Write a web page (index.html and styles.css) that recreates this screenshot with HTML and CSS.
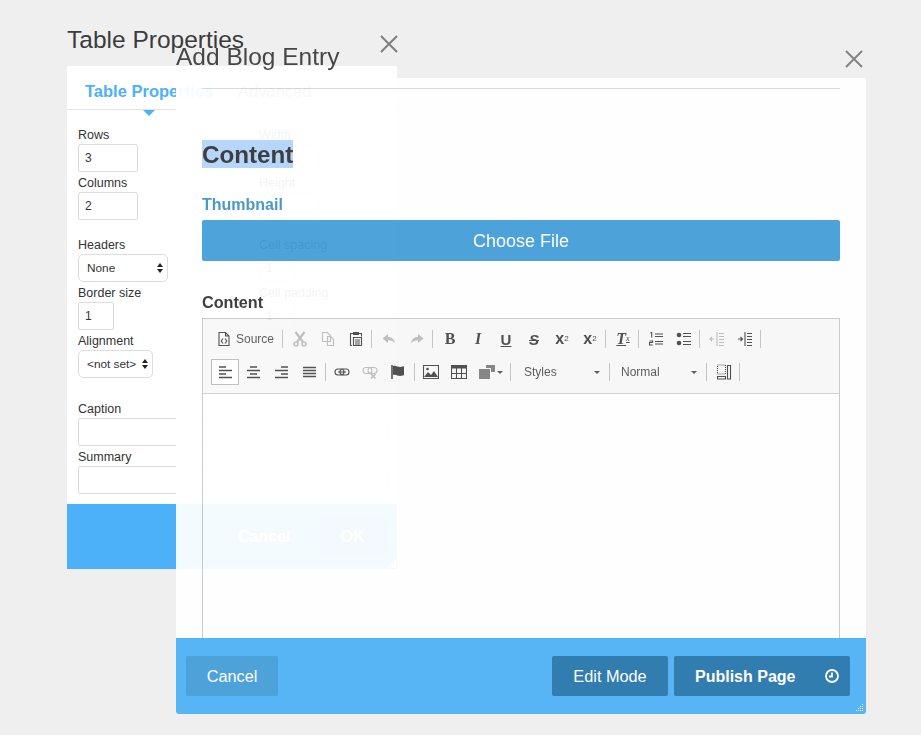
FILE: index.html
```html
<!DOCTYPE html>
<html lang="en">
<head>
<meta charset="utf-8">
<title>Add Blog Entry</title>
<link rel="stylesheet" href="styles.css">
</head>
<body>
<section class="win back">
  <header class="win-head">
    <h1>Table Properties</h1>
    <svg class="close" viewBox="0 0 18 18"><path d="M1 1l16 16M17 1L1 17"/></svg>
  </header>
  <div class="back-body">
    <nav class="tabs"><span class="tab on">Table Properties</span><span class="tab">Advanced</span></nav>
    <div class="form">
      <div class="cols">
        <div class="col">
          <div class="field"><label>Rows</label><input class="w60" value="3"></div>
          <div class="field"><label>Columns</label><input class="w60" value="2"></div>
          <div class="field mt14"><label>Headers</label><div class="sel w90"><span>None</span><svg viewBox="0 0 8 12"><path d="M4 1l3 4H1zM4 11L1 7h6z"/></svg></div></div>
          <div class="field"><label>Border size</label><input class="w36" value="1"></div>
          <div class="field"><label>Alignment</label><div class="sel w75"><span>&lt;not set&gt;</span><svg viewBox="0 0 8 12"><path d="M4 1l3 4H1zM4 11L1 7h6z"/></svg></div></div>
        </div>
        <div class="col">
          <div class="field"><label>Width</label><input class="w60"></div>
          <div class="field"><label>Height</label><input class="w60"></div>
          <div class="field mt14"><label>Cell spacing</label><input class="w36" value="1"></div>
          <div class="field"><label>Cell padding</label><input class="w36" value="1"></div>
        </div>
      </div>
      <div class="field mt21"><label>Caption</label><input class="wfull"></div>
      <div class="field"><label>Summary</label><input class="wfull"></div>
    </div>
    <footer class="back-foot"><button class="bf-btn">Cancel</button><button class="bf-btn dark">OK</button></footer>
  </div>
  <svg class="grip-back" viewBox="0 0 9 9"><path d="M9 0v9H0z"/></svg>
</section>

<section class="win front">
  <header class="win-head">
    <h1>Add Blog Entry</h1>
    <svg class="close" viewBox="0 0 18 18"><path d="M1 1l16 16M17 1L1 17"/></svg>
  </header>
  <div class="sheet">
    <div class="scroll">
      <hr class="rule">
      <h2><span class="picked">Content</span></h2>
      <h3>Thumbnail</h3>
      <button class="choose">Choose File</button>
      <h4>Content</h4>
      <div class="editor">
        <div class="toolbar">
          <div class="row">
            <span class="b source"><svg class="ic" viewBox="0 0 16 16"><path class="ln thin" d="M3 1.500h6.500L13 5v9.500H3zM9.500 1.500V5H13"/><path class="ln thin" d="M7 7.500L5.200 10 7 12.500M9 7.500l1.800 2.500L9 12.500"/></svg><em>Source</em></span>
            <i class="sep"></i>
            <span class="b off"><svg class="ic" viewBox="0 0 16 16"><path class="ln heavy" d="M3.500 1l7.500 10M12.500 1L5 11"/><circle class="ln" cx="4" cy="13" r="2"/><circle class="ln" cx="12" cy="13" r="2"/></svg></span>
            <span class="b off"><svg class="ic" viewBox="0 0 16 16"><path class="ln thin" d="M2.500 1.500h5l3 3v6h-8zM7.500 5.500h3l3 3v6h-6z"/></svg></span>
            <span class="b"><svg class="ic" viewBox="0 0 16 16"><path class="ln thin" d="M5 2.500H2.500v12H4M11 2.500h2.500v3"/><path class="fl" d="M5 1h6v3H5z"/><path class="ln thin" d="M5.500 6.500h8v8h-8zM7 9h5M7 11h5M7 13h5"/></svg></span>
            <i class="sep"></i>
            <span class="b off"><svg class="ic" viewBox="0 0 16 16"><path class="fl" d="M7 3L1.500 7.500 7 12V9.200c3 0 5 .8 7 3-.4-3.600-3-6-7-6.400z"/></svg></span>
            <span class="b off"><svg class="ic" viewBox="0 0 16 16"><path class="fl" d="M9 3l5.500 4.500L9 12V9.200c-3 0-5 .8-7 3 .4-3.600 3-6 7-6.400z"/></svg></span>
            <i class="sep"></i>
            <span class="b t bold">B</span>
            <span class="b t ital">I</span>
            <span class="b t under">U</span>
            <span class="b t strike">S</span>
            <span class="b t mark">x<sub>2</sub></span>
            <span class="b t mark">x<sup>2</sup></span>
            <i class="sep"></i>
            <span class="b t clear">T<sub>x</sub></span>
            <i class="sep"></i>
            <span class="b"><svg class="ic" viewBox="0 0 16 16"><path class="ln thin" d="M7 3h8M7 5.500h8M7 10.500h8M7 13h8M2.500 2l1.200-.5v5M1.500 10h3v1.500h-3v2.500h3.200"/></svg></span>
            <span class="b"><svg class="ic" viewBox="0 0 16 16"><circle class="fl" cx="3" cy="4" r="2.300"/><circle class="fl" cx="3" cy="12" r="2.300"/><path class="ln thin" d="M7 2.500h8M7 5.500h8M7 10.500h8M7 13.500h8"/></svg></span>
            <i class="sep"></i>
            <span class="b off"><svg class="ic" viewBox="0 0 16 16"><path class="ln thin" d="M8 1v14M10 2.500h5M10 5.500h5M10 8.500h5M10 11.500h5M10 14.500h5M1 8h4M3 6L1 8l2 2"/></svg></span>
            <span class="b"><svg class="ic" viewBox="0 0 16 16"><path class="ln thin" d="M8 1v14M10 2.500h5M10 5.500h5M10 8.500h5M10 11.500h5M10 14.500h5M1 8h4M3.500 6l2 2-2 2"/></svg></span>
            <i class="sep"></i>
          </div>
          <div class="row">
            <span class="b active"><svg class="ic" viewBox="0 0 16 16"><path class="ln" d="M2 3h7M2 6.500h13M2 10h7M2 13.500h13"/></svg></span>
            <span class="b"><svg class="ic" viewBox="0 0 16 16"><path class="ln" d="M5 3h7M2 6.500h13M5 10h7M2 13.500h13"/></svg></span>
            <span class="b"><svg class="ic" viewBox="0 0 16 16"><path class="ln" d="M8 3h7M2 6.500h13M8 10h7M2 13.500h13"/></svg></span>
            <span class="b"><svg class="ic" viewBox="0 0 16 16"><path class="ln" d="M2 3.500h13M2 6.500h13M2 9.500h13M2 12.500h13"/></svg></span>
            <i class="sep s2"></i>
            <span class="b"><svg class="ic" viewBox="0 0 16 16"><rect class="ln thin" x="1" y="5" width="9" height="6" rx="3"/><rect class="ln thin" x="6" y="5" width="9" height="6" rx="3"/><path class="ln thin" d="M4 8h8"/></svg></span>
            <span class="b off"><svg class="ic" viewBox="0 0 16 16"><rect class="ln thin" x="1" y="3.500" width="9" height="6" rx="3"/><rect class="ln thin" x="6" y="3.500" width="9" height="6" rx="3"/><path class="ln" d="M9 10l4.500 4.500M13.500 10L9 14.500"/></svg></span>
            <span class="b"><svg class="ic" viewBox="0 0 16 16"><path class="ln" d="M2 1v14"/><path class="fl" d="M3 2c3-1 4.500 1 7 1 2 0 4-1 4-1v9s-2 1-4 1c-2.500 0-4-2-7-1z"/></svg></span>
            <i class="sep s2"></i>
            <span class="b"><svg class="ic" viewBox="0 0 16 16"><path class="ln thin" d="M.5 1.500h15v13H.5z"/><path class="fl" d="M1 13l4-5 3 3 3-4 4 6z"/><circle class="fl" cx="4.500" cy="5" r="1.300"/></svg></span>
            <span class="b"><svg class="ic" viewBox="0 0 16 16"><path class="fl" d="M.5 1.500h15v3H.5z"/><path class="ln thin" d="M.5 1.500h15v13H.5zM.5 9.500h15M5.500 4v10.500M10.500 4v10.500"/></svg></span>
            <span class="b wide"><svg class="ic" viewBox="0 0 16 16"><path class="fl mid" d="M0 5h11v10H0zM7 1h9v7h-4V4H7z"/></svg><svg class="caret" viewBox="0 0 6 3"><path d="M0 0h6L3 3z"/></svg></span>
            <i class="sep"></i>
            <span class="combo c1"><em>Styles</em><svg class="caret" viewBox="0 0 6 3"><path d="M0 0h6L3 3z"/></svg></span>
            <i class="sep"></i>
            <span class="combo c2"><em>Normal</em><svg class="caret" viewBox="0 0 6 3"><path d="M0 0h6L3 3z"/></svg></span>
            <i class="sep"></i>
            <span class="b"><svg class="ic" viewBox="0 0 16 16"><path class="ln thin dash" d="M1.500 1h8v9h-8z"/><path class="ln thin" d="M1.500 12.500h8v2.500h-8zM11.500 1.500h3v13.500h-3z"/></svg></span>
            <i class="sep"></i>
          </div>
        </div>
        <div class="area"></div>
      </div>
    </div>
    <footer class="front-foot">
      <button class="ff-btn cancel">Cancel</button>
      <div class="ff-right">
        <button class="ff-btn edit">Edit Mode</button>
        <button class="ff-btn publish"><strong>Publish Page</strong><svg class="clock" viewBox="0 0 14 14"><circle cx="7" cy="7" r="6"/><path d="M7 3.500V7.500H4"/></svg></button>
      </div>
    </footer>
    <svg class="grip" viewBox="0 0 9 9"><path d="M8 1v1H7V1zM6 3v1H5V3zM8 3v1H7V3zM4 5v1H3V5zM6 5v1H5V5zM8 5v1H7V5zM2 7v1H1V7zM4 7v1H3V7zM6 7v1H5V7zM8 7v1H7V7z"/></svg>
  </div>
</section>
</body>
</html>
```
FILE: styles.css
```css
* { box-sizing: border-box; }
html, body { height: 100%; }
body {
  margin: 0;
  background: #efefef;
  overflow: hidden;
  font-family: "Liberation Sans", Arial, sans-serif;
  color: #333;
}
.win { position: absolute; }
.win-head {
  display: flex;
  justify-content: space-between;
  align-items: center;
}
.win-head h1 {
  margin: 0;
  font-size: 24.5px;
  font-weight: 400;
  line-height: 28px;
  color: #3c3c3c;
}
.close { width: 18px; height: 18px; flex: none; }
.close path { stroke: #7d7d7d; stroke-width: 2; fill: none; }

/* back dialog */
.back { left: 67px; top: 20px; width: 330px; }
.back .win-head { height: 46px; }
.back .win-head h1 { margin-top: -6px; }
.back .close { margin-right: -1px; margin-top: 2px; }
.back-body { background: #fff; height: 503px; display: flex; flex-direction: column; }
.tabs {
  height: 44px;
  flex: none;
  display: flex;
  gap: 25px;
  padding: 16px 0 0 18px;
  border-bottom: 1px solid #e4e4e4;
  font-size: 16.5px;
  line-height: 18px;
  color: #777;
}
.tab { position: relative; }
.tab.on { color: #4db1fa; font-weight: 700; }
.tab.on::after {
  content: "";
  position: absolute;
  left: 58px;
  top: 28px;
  border: 6px solid transparent;
  border-top: 6px solid #4db1fa;
  border-bottom: 0;
}
.form { padding: 17px 9px 0 11px; flex: 1; }
.cols { display: flex; }
.col { width: 181px; flex: none; }
.field { margin-bottom: 3px; }
.field label { display: block; height: 14px; margin-bottom: 3px; font-size: 12.5px; line-height: 16px; color: #333; }
.mt14 { margin-top: 17px; }
.mt21 { margin-top: 20px; }
input {
  display: block;
  height: 28px;
  padding: 0 6px;
  border: 1px solid #ddd;
  border-radius: 2px;
  font: 12px "Liberation Sans", Arial, sans-serif;
  color: #333;
  background: #fff;
}
.w60 { width: 60px; }
.w36 { width: 36px; }
.wfull { width: 310px; }
.sel {
  height: 28px;
  display: flex;
  align-items: center;
  justify-content: space-between;
  padding: 0 3px 0 8px;
  border: 1px solid #ddd;
  border-radius: 5px;
  font-size: 11.8px;
}
.sel svg { width: 8px; height: 12px; fill: #222; }
.w90 { width: 90px; }
.w75 { width: 75px; }
.back-foot {
  height: 65px;
  flex: none;
  background: #4db1fa;
  display: flex;
  justify-content: flex-end;
  align-items: center;
  gap: 8px;
  padding: 0 11px 0 0;
}
.bf-btn {
  height: 41px;
  border: 0;
  border-radius: 3px;
  background: #4db1fa;
  color: #fff;
  font: 700 16px "Liberation Sans", Arial, sans-serif;
  width: 94px;
  padding: 1px 0 0;
}
.bf-btn.dark { width: 67px; background: #3f9fe4; }
.grip-back { position: absolute; right: 1px; bottom: 1px; width: 9px; height: 9px; fill: #fff; }

/* front dialog */
.front { left: 176px; top: 40px; width: 690px; opacity: .945; }
.front .win-head { height: 38px; }
.front .win-head h1 { margin-top: -4px; }
.front .close { margin: -1px 3px 0 0; }
.sheet { position: relative; height: 636px; background: #fff; border-radius: 0 0 3px 3px; display: flex; flex-direction: column; overflow: hidden; }
.scroll { height: 560px; flex: none; overflow: hidden; padding: 10px 26px 0; }
.rule { margin: 0; border: 0; border-top: 1px solid #d8d8d8; }
h2 { margin: 51px 0 0; font-size: 24.2px; line-height: 28px; height: 28px; font-weight: 700; color: #333; }
.picked { display: inline-block; height: 28px; line-height: 30px; background: #b3d4fc; }
h3 { margin: 27px 0 0; height: 18px; font-size: 16px; line-height: 19px; font-weight: 700; color: #3f93c6; }
.choose {
  display: block;
  width: 100%;
  height: 41px;
  margin-top: 7px;
  padding: 2px 0 0;
  border: 0;
  border-radius: 2px;
  background: #459ed9;
  color: #fff;
  font: 18px "Liberation Sans", Arial, sans-serif;
}
h4 { margin: 32px 0 0; height: 18px; font-size: 16.2px; line-height: 18px; font-weight: 700; color: #333; }
.editor { margin-top: 7px; border: 1px solid #c9c9c9; height: 400px; }
.toolbar {
  background: #f8f8f8;
  border-bottom: 1px solid #d1d1d1;
  padding: 7px 8px 7px;
  height: 75px;
  display: flex;
  flex-direction: column;
  gap: 7px;
}
.row { display: flex; height: 26px; align-items: center; }
.b {
  width: 28px;
  height: 26px;
  flex: none;
  display: flex;
  align-items: center;
  justify-content: center;
  color: #474747;
}
.b.off { color: #bcbcbc; }
.b.source { width: 70px; justify-content: flex-start; padding-left: 5px; gap: 4px; }
.b.wide { width: 36px; justify-content: flex-start; padding-left: 6px; gap: 2px; }
.b.active { border: 1px solid #bcbcbc; background: #fff; }
.b em, .combo em { font-style: normal; font-size: 12px; color: #555; }
.ic { width: 16px; height: 16px; flex: none; }
.ln { fill: none; stroke: currentColor; stroke-width: 1.6; }
.thin { stroke-width: 1.1; }
.heavy { stroke-width: 2.2; }
.dash { stroke-dasharray: 1 1; }
.fl { fill: currentColor; }
.mid { fill: #808080; }
.sep { display: block; flex: none; width: 5px; height: 18px; padding-left: 1px; }
.sep::before { content: ""; display: block; width: 1px; height: 18px; background: #c4c4c4; }
.sep.s2 { padding-left: 2px; }
.caret { width: 6px; height: 3px; fill: #555; flex: none; }
.combo {
  height: 26px;
  flex: none;
  display: flex;
  align-items: center;
  justify-content: space-between;
}
.c1 { width: 94px; padding: 0 8px 0 10px; }
.c2 { width: 92px; padding: 0 8px 0 8px; }
.t { font-size: 16px; font-family: "Liberation Serif", serif; font-weight: 700; color: #474747; }
.ital { font-style: italic; }
.under { font-family: "Liberation Sans", sans-serif; font-size: 15px; text-decoration: underline; }
.strike { font-family: "Liberation Sans", sans-serif; font-size: 15px; font-style: italic; text-decoration: line-through; }
.mark { font-family: "Liberation Sans", sans-serif; font-size: 16px; }
.mark sub, .mark sup, .clear sub { font-size: 8px; font-weight: 400; line-height: 0; }
.clear { font-style: italic; text-decoration: underline; }
.area { height: 320px; background: #fff; }

.front-foot {
  height: 76px;
  flex: none;
  background: #4eb1f6;
  display: flex;
  justify-content: space-between;
  align-items: center;
  padding: 0 16px 0 10px;
}
.ff-right { display: flex; gap: 6px; }
.ff-btn {
  height: 40px;
  border: 0;
  border-radius: 2px;
  color: #fff;
  font: 16.3px "Liberation Sans", Arial, sans-serif;
  padding: 1px 0 0;
}
.cancel { width: 92px; background: #459ed9; }
.edit { width: 116px; background: #2676ac; }
.publish {
  width: 176px;
  background: #2676ac;
  display: flex;
  align-items: center;
  justify-content: space-between;
  padding: 1px 11px 0 21px;
}
.publish strong { font-size: 16px; }
.clock { width: 14px; height: 14px; fill: none; stroke: #fff; stroke-width: 1.8; margin-top: -1px; }
.grip { position: absolute; right: 2px; bottom: 2px; width: 9px; height: 9px; fill: #fff; }
```
